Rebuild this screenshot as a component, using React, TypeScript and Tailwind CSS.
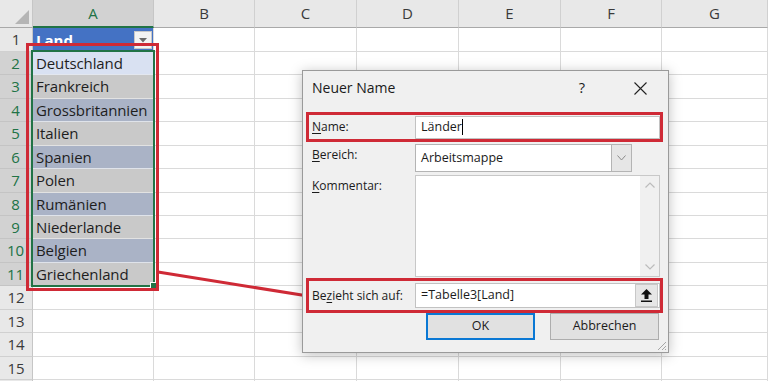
import React from 'react';

const colW = ['w-[121px]', 'w-[101px]', 'w-[102px]', 'w-[102px]', 'w-[102px]', 'w-[101px]', 'w-[106px]'];
const letters = ['A', 'B', 'C', 'D', 'E', 'F', 'G'];
const rowH = [
  'h-[24px]', 'h-[23px]', 'h-[24px]', 'h-[23px]', 'h-[24px]', 'h-[23px]', 'h-[24px]', 'h-[23px]',
  'h-[23px]', 'h-[24px]', 'h-[23px]', 'h-[24px]', 'h-[23px]', 'h-[24px]', 'h-[23px]', 'h-[24px]',
];
const countries = [
  'Deutschland', 'Frankreich', 'Grossbritannien', 'Italien', 'Spanien',
  'Polen', 'Rumänien', 'Niederlande', 'Belgien', 'Griechenland',
];

function cellA(row: number) {
  if (row === 1) return 'bg-[#4472c4]';
  if (row === 2) return 'bg-[#d9e1f2] border-b border-b-[#e3e7ef]';
  if (row >= 3 && row <= 11) {
    return row % 2 === 0
      ? 'bg-[#aab3c6] border-b border-b-[#dfe3ea]'
      : 'bg-[#c9c9c9] border-b border-b-[#e2e2e2]';
  }
  return 'bg-white border-b border-b-[#dadada]';
}

function Sheet() {
  return (
    <div className="flex flex-col font-['Open_Sans',sans-serif]">
      <div className="flex h-[28px] shrink-0">
        <div className="w-[33px] shrink-0 bg-[#e8e8e8] border-r border-b border-r-[#c6c6c6] border-b-[#a9a9a9] relative">
          <svg className="absolute left-[15px] top-[10px]" width="14" height="14" viewBox="0 0 14 14">
            <polygon points="14,0 14,14 0,14" fill="#b5b5b5" />
          </svg>
        </div>
        {letters.map((l, i) => (
          <div
            key={l}
            className={`${colW[i]} shrink-0 flex items-center justify-center text-[15px] border-r ${
              i === 0
                ? 'bg-[#d2d2d2] text-[#217346] border-r-[#c6c6c6] border-b-2 border-b-[#217346]'
                : 'bg-[#e8e8e8] text-[#3a3a3a] border-r-[#d0d0d0] border-b border-b-[#a9a9a9]'
            }`}
          >
            {l}
          </div>
        ))}
      </div>
      {rowH.map((h, idx) => {
        const row = idx + 1;
        const sel = row >= 2 && row <= 11;
        return (
          <div key={row} className={`flex ${h} shrink-0`}>
            <div
              className={`w-[33px] shrink-0 flex items-center justify-center text-[15px] border-b border-r ${
                sel
                  ? 'bg-[#d2d2d2] text-[#217346] border-b-[#c4c4c4] border-r-[#217346] border-r-2'
                  : 'bg-[#e8e8e8] text-[#3a3a3a] border-b-[#d0d0d0] border-r-[#c6c6c6]'
              }`}
            >
              {row <= 15 ? row : ''}
            </div>
            <div className={`w-[121px] shrink-0 flex items-center pl-[3px] text-[15px] border-r border-r-[#dadada] ${cellA(row)}`}>
              {row === 1 && (
                <div className="flex items-center justify-between w-full">
                  <span className="text-white font-bold">Land</span>
                  <span className="w-[18px] h-[18px] mr-[1px] bg-[#f3f3f3] border border-[#c8c8c8] flex items-center justify-center">
                    <svg width="8" height="5" viewBox="0 0 8 5">
                      <polygon points="0,0 8,0 4,4.5" fill="#6a6a6a" />
                    </svg>
                  </span>
                </div>
              )}
              {sel && <span className="text-[#1e1e1e] tracking-[-0.1px]">{countries[row - 2]}</span>}
            </div>
            {colW.slice(1).map((w, i) => (
              <div key={i} className={`${w} shrink-0 bg-white border-r border-b border-[#dadada]`} />
            ))}
          </div>
        );
      })}
    </div>
  );
}

function Dialog() {
  return (
    <div className="absolute left-[302px] top-[70px] w-[367px] h-[283px] bg-[#f0f0f0] border border-[#9a9a9a] shadow-[0_2px_12px_rgba(0,0,0,0.25)] font-['Open_Sans',sans-serif] text-[#1b1b1b]">
      <div className="h-[41px] flex items-start pl-[9px] pr-[5px] pt-[6px]">
        <span className="flex-1 text-[14px] leading-[22px]">Neuer Name</span>
        <div className="flex gap-[12px] -mt-[4px]">
          <div className="w-[46px] h-[30px] flex items-center justify-center text-[14.5px]">?</div>
          <div className="w-[46px] h-[30px] flex items-center justify-center">
            <svg width="13" height="13" viewBox="0 0 13 13">
              <path d="M0.5 0.5 L12.5 12.5 M12.5 0.5 L0.5 12.5" stroke="#222" strokeWidth="1.1" />
            </svg>
          </div>
        </div>
      </div>

      <div className="ml-[3px] mr-[5px] h-[30px] flex items-center border-[3px] border-[#cf2a36]">
        <div className="w-[106px] pl-[3px] text-[12px]">
          <span className="underline underline-offset-2">N</span>ame:
        </div>
        <div className="flex-1 h-[23px] bg-white border border-[#c2c2c2] flex items-center pl-[5px] text-[12.5px]">
          Länder<span className="w-px h-[16px] bg-black" />
        </div>
      </div>

      <div className="ml-[3px] mr-[5px] h-[32px] flex items-start px-[3px]">
        <div className="w-[106px] pl-[3px] pt-[4px] text-[12px]">
          <span className="underline underline-offset-2">B</span>ereich:
        </div>
        <div className="w-[217px] h-[28px] mt-[2px] bg-white border border-[#b4b4b4] flex items-center">
          <span className="flex-1 pl-[5px] text-[12.5px]">Arbeitsmappe</span>
          <span className="w-[20px] h-full bg-[#e6e6e6] border-l border-[#b4b4b4] flex items-center justify-center">
            <svg width="9" height="6" viewBox="0 0 9 6">
              <path d="M0.5 0.5 L4.5 5 L8.5 0.5" stroke="#8a8a8a" fill="none" strokeWidth="1" />
            </svg>
          </span>
        </div>
      </div>

      <div className="ml-[3px] mr-[5px] h-[104px] flex items-start px-[3px]">
        <div className="w-[106px] pl-[3px] pt-[3px] text-[12px]">
          <span className="underline underline-offset-2">K</span>ommentar:
        </div>
        <div className="flex-1 h-[102px] mt-[1px] bg-white border border-[#c8c8c8] flex justify-end">
          <div className="w-[19px] h-full bg-[#f0f0f0] flex flex-col items-center justify-between py-[6px]">
            <svg width="10" height="6" viewBox="0 0 10 6">
              <path d="M0.5 5.5 L5 1 L9.5 5.5" stroke="#bcbcbc" fill="none" strokeWidth="1.2" />
            </svg>
            <svg width="10" height="6" viewBox="0 0 10 6">
              <path d="M0.5 0.5 L5 5 L9.5 0.5" stroke="#bcbcbc" fill="none" strokeWidth="1.2" />
            </svg>
          </div>
        </div>
      </div>

      <div className="ml-[3px] mr-[5px] h-[35px] flex items-center border-[3px] border-[#cf2a36]">
        <div className="w-[106px] pl-[3px] text-[12px]">
          Be<span className="underline underline-offset-2">z</span>ieht sich auf:
        </div>
        <div className="flex-1 h-[25px] bg-white border border-[#c2c2c2] flex items-center">
          <span className="flex-1 pl-[5px] text-[12.5px]">=Tabelle3[Land]</span>
          <span className="w-[23px] h-[23px] mr-[1px] bg-[#e6e6e6] border border-[#c8c8c8] flex items-center justify-center">
            <svg width="11" height="13" viewBox="0 0 11 13">
              <polygon points="5.5,0 11,5.5 7.5,5.5 7.5,10 3.5,10 3.5,5.5 0,5.5" fill="#111" />
              <rect x="0" y="11.5" width="11" height="1.5" fill="#111" />
            </svg>
          </span>
        </div>
      </div>

      <div className="h-[27px] flex justify-end gap-[15px] pr-[9px]">
        <div className="w-[109px] h-[27px] bg-[#e1e1e1] border-2 border-[#0a78d4] flex items-center justify-center text-[12.5px]">
          OK
        </div>
        <div className="w-[109px] h-[27px] bg-[#e1e1e1] border border-[#adadad] flex items-center justify-center text-[12.5px]">
          Abbrechen
        </div>
      </div>

      <svg className="absolute right-[1px] bottom-[1px]" width="12" height="12" viewBox="0 0 12 12">
        <path d="M11 3 L3 11 M11 7 L7 11 M11 10 L10 11" stroke="#a6a6a6" strokeWidth="1" />
      </svg>
    </div>
  );
}

export default function App() {
  return (
    <div className="relative w-[768px] h-[381px] overflow-hidden bg-white">
      <Sheet />

      {/* selection range A2:A11 */}
      <div className="absolute left-[31px] top-[50px] w-[124px] h-[237px] border-2 border-[#217346]" />
      <div className="absolute left-[150px] top-[282px] w-[7px] h-[7px] bg-[#217346] border border-white" />

      {/* annotation */}
      <div className="absolute left-[26px] top-[43px] w-[133px] h-[248px] border-[3px] border-[#cf2a36]" />
      <svg className="absolute left-0 top-0 pointer-events-none" width="768" height="381">
        <line x1="158" y1="272" x2="308" y2="296" stroke="#cf2a36" strokeWidth="3" />
      </svg>

      <Dialog />
    </div>
  );
}
